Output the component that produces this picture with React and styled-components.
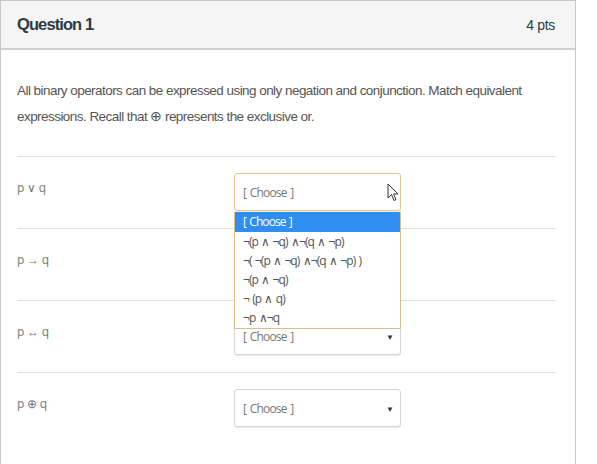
import React from 'react';
import styled, { createGlobalStyle } from 'styled-components';

const GlobalStyle = createGlobalStyle`
  html, body {
    margin: 0;
    padding: 0;
    background: #fff;
  }
  body {
    font-family: "Liberation Sans", Arial, sans-serif;
  }
`;

const Panel = styled.div`
  width: 576px;
  border: 1px solid #c8c8c8;
  border-bottom: none;
  min-height: 470px;
  box-sizing: border-box;
`;

const Header = styled.div`
  height: 47px;
  background: #f5f5f5;
  border-bottom: 2px solid #d0d0d0;
  display: flex;
  align-items: center;
  justify-content: space-between;
  padding: 0 20px 0 16px;
`;

const Title = styled.h2`
  margin: 0;
  font-size: 16.5px;
  font-weight: bold;
  letter-spacing: -0.9px;
  color: #2d3b45;
`;

const Points = styled.span`
  font-size: 14px;
  letter-spacing: -0.3px;
  color: #2d3b45;
`;

const Body = styled.div`
  padding: 28px 19px 0 16px;
`;

const Prompt = styled.p`
  margin: 0 0 26px;
  font-size: 13.5px;
  line-height: 26px;
  letter-spacing: -0.55px;
  color: #555;
`;

const Rows = styled.div`
  position: relative;
`;

const Row = styled.div`
  display: flex;
  align-items: flex-start;
  border-top: 1px solid #e2e2e2;
  padding: 16px 0 17px;
`;

const Label = styled.div`
  width: 217px;
  flex-shrink: 0;
  padding-top: 6px;
  font-family: "Open Sans", sans-serif;
  font-size: 12px;
  color: #777;
  letter-spacing: -0.2px;
`;

const Select = styled.div`
  position: relative;
  width: 167px;
  height: 38px;
  box-sizing: border-box;
  display: flex;
  align-items: center;
  justify-content: space-between;
  padding: 0 7px 0 8px;
  background: #fff;
  border: 1px solid ${({ $focused }) => ($focused ? '#e3c48d' : '#d5d5d5')};
  border-radius: 3px;
  box-shadow: 0 1px 1px rgba(0, 0, 0, 0.08);
  font-family: "Open Sans", sans-serif;
  font-size: 12px;
  color: #777;
  letter-spacing: -0.85px;
  word-spacing: 1.5px;
`;

const Arrow = styled.span`
  font-size: 8px;
  color: #333;
`;

const Dropdown = styled.ul`
  position: absolute;
  top: 56px;
  left: 217px;
  width: 167px;
  box-sizing: border-box;
  margin: 0;
  padding: 0 0 1px;
  list-style: none;
  background: #fff;
  border: 1px solid #dcbf86;
  border-top: none;
  z-index: 2;
`;

const Option = styled.li`
  height: 19px;
  line-height: 19px;
  padding: 0 8px;
  font-family: "Open Sans", sans-serif;
  font-size: 12px;
  letter-spacing: -0.9px;
  word-spacing: 1px;
  white-space: nowrap;
  color: ${({ $active }) => ($active ? '#fff' : '#555')};
  background: ${({ $active }) => ($active ? '#2f8ff0' : 'transparent')};
  &:first-child {
    height: 20px;
    line-height: 20px;
  }
`;

const Cursor = styled.svg`
  position: absolute;
  top: 9px;
  right: 1px;
`;

const rows = ['p ∨ q', 'p → q', 'p ↔ q', 'p ⊕ q'];

const options = [
  '[ Choose ]',
  '¬(p ∧ ¬q) ∧¬(q ∧ ¬p)',
  '¬( ¬(p ∧ ¬q) ∧¬(q ∧ ¬p) )',
  '¬(p ∧ ¬q)',
  '¬ (p ∧ q)',
  '¬p ∧¬q',
];

const App = () => {
  return (
    <>
      <GlobalStyle />
      <Panel>
        <Header>
          <Title>Question 1</Title>
          <Points>4 pts</Points>
        </Header>
        <Body>
          <Prompt>
            All binary operators can be expressed using only negation and conjunction. Match equivalent
            expressions. Recall that ⊕ represents the exclusive or.
          </Prompt>
          <Rows>
            {rows.map((label, i) => (
              <Row key={label}>
                <Label>{label}</Label>
                <Select $focused={i === 0}>
                  <span>[ Choose ]</span>
                  {i === 0 ? (
                    <Cursor width="12" height="19" viewBox="0 0 12 19">
                      <path
                        d="M1 1 L1 15 L4.5 11.5 L7 17.5 L9 16.6 L6.6 11 L11 11 Z"
                        fill="#fff"
                        stroke="#333"
                        strokeWidth="1"
                        strokeLinejoin="round"
                      />
                    </Cursor>
                  ) : (
                    <Arrow>▼</Arrow>
                  )}
                </Select>
              </Row>
            ))}
            <Dropdown>
              {options.map((o, i) => (
                <Option key={o} $active={i === 0}>
                  {o}
                </Option>
              ))}
            </Dropdown>
          </Rows>
        </Body>
      </Panel>
    </>
  );
};

export default App;
